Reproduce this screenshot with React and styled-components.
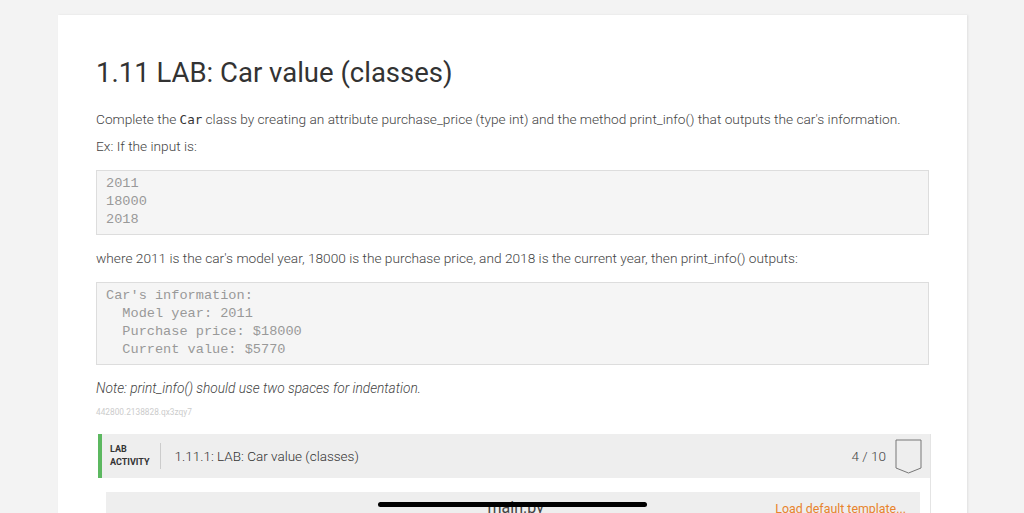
import React from "react";
import styled, { createGlobalStyle } from "styled-components";

const GlobalStyle = createGlobalStyle`
  html, body {
    margin: 0;
    padding: 0;
    background: #f3f3f3;
    overflow: hidden;
    font-family: Roboto, "Liberation Sans", sans-serif;
  }
`;

const Page = styled.div`
  padding: 15px 0 0 58px;
  height: 498px;
  overflow: hidden;
  position: relative;
`;

const Card = styled.div`
  width: 833px;
  padding: 40px 38px 0 38px;
  background: #fff;
  box-shadow: 1px 0 2px rgba(0, 0, 0, 0.08);
  min-height: 600px;
`;

const Title = styled.h1`
  margin: 0 0 20px;
  font-size: 27.5px;
  font-weight: 400;
  color: #333;
  line-height: 36px;
`;

const Para = styled.p`
  margin: 0 0 ${(p) => p.$mb || 10}px;
  font-size: 13.7px;
  font-weight: 300;
  color: #444;
  line-height: 17px;
  font-style: ${(p) => (p.$italic ? "italic" : "normal")};
`;

const InlineCode = styled.code`
  font-family: "DejaVu Sans Mono", monospace;
  font-size: 12.5px;
  line-height: 1;
  color: #333;
`;

const CodeBox = styled.pre`
  margin: 0 0 ${(p) => p.$mb || 15}px;
  padding: 4px 9px 5px;
  background: #f5f5f5;
  border: 1px solid #ddd;
  font-family: "Liberation Mono", "Courier New", monospace;
  font-size: 13.6px;
  line-height: 18px;
  color: #999;
  white-space: pre;
`;

const Tag = styled.div`
  font-size: 8.3px;
  color: #ccc;
  margin: 8px 0 17px;
`;

const LabPanel = styled.div`
  margin: 0 -2px 0 2px;
  border-right: 1px solid #e4e4e4;
`;

const LabHeader = styled.div`
  display: flex;
  align-items: center;
  height: 44px;
  background: #eee;
  border-left: 4px solid #5cb860;
`;

const LabLabel = styled.div`
  font-size: 9px;
  font-weight: 700;
  line-height: 13px;
  color: #333;
  padding: 0 10px 0 8px;
  border-right: 1px solid #ccc;
  margin-right: 14px;
`;

const LabTitle = styled.div`
  flex: 1;
  font-size: 13.5px;
  font-weight: 300;
  color: #333;
`;

const Score = styled.div`
  font-size: 13.5px;
  font-weight: 300;
  color: #444;
  margin-right: 9px;
`;

const Badge = styled.svg`
  margin-right: 8px;
  display: block;
`;

const EditorArea = styled.div`
  padding: 14px 10px 0 8px;
  background: #fff;
`;

const EditorBar = styled.div`
  display: flex;
  align-items: flex-start;
  justify-content: space-between;
  background: #eee;
  height: 30px;
  padding: 7px 14px 0 0;
`;

const FileName = styled.span`
  flex: 1;
  text-align: center;
  font-size: 16px;
  color: #444;
  padding-left: 150px;
  margin-top: -1px;
`;

const LoadLink = styled.span`
  font-size: 12.4px;
  color: #e8832d;
  margin-top: 2px;
`;

const HomeIndicator = styled.div`
  position: absolute;
  left: 378px;
  top: 502px;
  width: 269px;
  height: 5px;
  border-radius: 3px;
  background: #000;
`;

export default function App() {
  return (
    <>
      <GlobalStyle />
      <Page>
        <Card>
          <Title>1.11 LAB: Car value (classes)</Title>
          <Para>
            Complete the <InlineCode>Car</InlineCode> class by creating an attribute
            purchase_price (type int) and the method print_info() that outputs the
            car's information.
          </Para>
          <Para $mb={15}>Ex: If the input is:</Para>
          <CodeBox>{"2011\n18000\n2018"}</CodeBox>
          <Para $mb={15}>
            where 2011 is the car's model year, 18000 is the purchase price, and 2018
            is the current year, then print_info() outputs:
          </Para>
          <CodeBox $mb={15}>
            {"Car's information:\n  Model year: 2011\n  Purchase price: $18000\n  Current value: $5770"}
          </CodeBox>
          <Para $italic $mb={0}>
            Note: print_info() should use two spaces for indentation.
          </Para>
          <Tag>442800.2138828.qx3zqy7</Tag>
          <LabPanel>
            <LabHeader>
              <LabLabel>
                LAB
                <br />
                ACTIVITY
              </LabLabel>
              <LabTitle>1.11.1: LAB: Car value (classes)</LabTitle>
              <Score>4 / 10</Score>
              <Badge width="27" height="35" viewBox="0 0 27 35">
                <path
                  d="M1 1 H26 V29 L13.5 34 L1 29 Z"
                  fill="none"
                  stroke="#777"
                  strokeWidth="1"
                />
              </Badge>
            </LabHeader>
            <EditorArea>
              <EditorBar>
                <FileName>main.py</FileName>
                <LoadLink>Load default template...</LoadLink>
              </EditorBar>
            </EditorArea>
          </LabPanel>
        </Card>
        <HomeIndicator />
      </Page>
    </>
  );
}
